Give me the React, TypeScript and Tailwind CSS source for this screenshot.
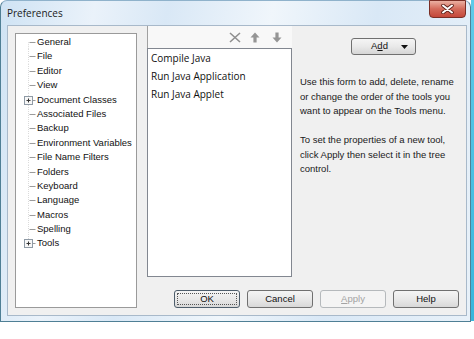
import React from "react";

const treeItems: { label: string; expandable?: boolean }[] = [
    { label: "General" },
    { label: "File" },
    { label: "Editor" },
    { label: "View" },
    { label: "Document Classes", expandable: true },
    { label: "Associated Files" },
    { label: "Backup" },
    { label: "Environment Variables" },
    { label: "File Name Filters" },
    { label: "Folders" },
    { label: "Keyboard" },
    { label: "Language" },
    { label: "Macros" },
    { label: "Spelling" },
    { label: "Tools", expandable: true },
];

const tools = ["Compile Java", "Run Java Application", "Run Java Applet"];

function TreeRow({ label, expandable, first, last }: { label: string; expandable?: boolean; first: boolean; last: boolean }) {
    return (
        <div className="flex items-center h-[14.4px] leading-[14.4px] whitespace-nowrap">
            <svg width="21" height="14.4" viewBox="0 0 21 14.4" className="shrink-0">
                <line x1="12.5" y1={first ? 7.2 : 0} x2="12.5" y2={last ? 7.2 : 14.4} stroke="#dadada" strokeWidth="1" strokeDasharray="1 1" />
                <line x1="13.5" y1="7.5" x2="19.5" y2="7.5" stroke="#9a9a9a" strokeWidth="1" />
                {expandable && (
                    <g>
                        <rect x="8.5" y="3.5" width="8" height="8" fill="#f7f7f7" stroke="#8f9aa5" />
                        <line x1="10.5" y1="7.5" x2="14.5" y2="7.5" stroke="#333" />
                        <line x1="12.5" y1="5.5" x2="12.5" y2="9.5" stroke="#333" />
                    </g>
                )}
            </svg>
            <span className="text-[#111]">{label}</span>
        </div>
    );
}

function DlgButton({ children, disabled, isDefault }: { children: React.ReactNode; disabled?: boolean; isDefault?: boolean }) {
    return (
        <div
            className={`relative w-[66px] h-[18px] rounded-[3px] border flex items-center justify-center text-[9.5px] ${
                disabled
                    ? "border-[#b5b9bc] bg-[#f4f4f4] text-[#a3a3a3]"
                    : isDefault
                    ? "border-[#4d5d6b] bg-linear-to-b from-[#f5f5f5] via-[#e9e9e9] to-[#d8d8d8] text-[#111]"
                    : "border-[#707070] bg-linear-to-b from-[#f5f5f5] via-[#e9e9e9] to-[#d8d8d8] text-[#111]"
            }`}
        >
            {isDefault && <span className="absolute inset-[2px] border border-dotted border-[#555] rounded-[1px]" />}
            <span className="relative">{children}</span>
        </div>
    );
}

export default function App() {
    return (
        <div className="w-[474px] h-[339px] bg-white flex items-start overflow-hidden font-['Liberation_Sans',Arial,sans-serif]">
            <div className="w-[471px] h-[322px] flex flex-col rounded-t-[7px] border border-[#4f7f95] border-t-[#8fb2cb] bg-[linear-gradient(100deg,#cfe3f4_0%,#eaf2fa_18%,#d9e8f6_32%,#f0f6fb_52%,#d9e8f6_72%,#e8f1f9_100%)]">
                {/* title bar */}
                <div className="h-[24px] flex items-start justify-between shrink-0">
                    <div className="pl-[6px] pt-[5px] leading-[14px] text-[10px] text-[#1a1a1a] font-['Open_Sans',sans-serif]">Preferences</div>
                    <div className="mr-[4px] -mt-px w-[37px] h-[18px] rounded-b-[4px] border border-[#7a2e25] bg-linear-to-b from-[#eab0a2] via-[#d36a5a] to-[#c4473a] flex items-center justify-center">
                        <svg width="13" height="10" viewBox="0 0 13 10">
                            <path d="M2 1.5 L11 8.5 M11 1.5 L2 8.5" stroke="#5a1f18" strokeWidth="3.6" strokeLinecap="round" />
                            <path d="M2 1.5 L11 8.5 M11 1.5 L2 8.5" stroke="#ffffff" strokeWidth="2" strokeLinecap="round" />
                        </svg>
                    </div>
                </div>

                {/* client area */}
                <div className="mx-[6px] w-[460px] h-[291px] shrink-0 border border-[#a8b9ca] bg-[#f0f0f0] flex">
                    {/* tree */}
                    <div className="ml-[7px] mt-[7px] w-[122px] h-[275px] border border-[#9a9a9a] bg-white pt-px text-[9.5px] shrink-0">
                        {treeItems.map((it, i) => (
                            <TreeRow key={it.label} label={it.label} expandable={it.expandable} first={i === 0} last={i === treeItems.length - 1} />
                        ))}
                    </div>

                    {/* right side */}
                    <div className="ml-[10px] flex-1 flex flex-col">
                        <div className="h-[251px] flex">
                            {/* tools list */}
                            <div className="w-[145px] flex flex-col">
                                <div className="h-[22px] border-l border-[#a0a0a0] bg-[#f8f8f8] flex items-center justify-end pr-[10px]">
                                    <svg width="12" height="11" viewBox="0 0 12 11" className="mr-[9px]">
                                        <path d="M1 1 L11 10 M11 1 L1 10" stroke="#8f8f8f" strokeWidth="1.6" />
                                    </svg>
                                    <svg width="10" height="11" viewBox="0 0 10 11" className="mr-[12px]">
                                        <path d="M5 0.5 L9.5 5.5 L6.6 5.5 L6.6 10.5 L3.4 10.5 L3.4 5.5 L0.5 5.5 Z" fill="#959595" />
                                    </svg>
                                    <svg width="10" height="11" viewBox="0 0 10 11">
                                        <path d="M5 10.5 L9.5 5.5 L6.6 5.5 L6.6 0.5 L3.4 0.5 L3.4 5.5 L0.5 5.5 Z" fill="#959595" />
                                    </svg>
                                </div>
                                <div className="flex-1 border border-[#828790] bg-white pl-[3px] text-[10px] leading-[18px] text-[#111] font-['Open_Sans',sans-serif]">
                                    {tools.map(t => (
                                        <div key={t}>{t}</div>
                                    ))}
                                </div>
                            </div>

                            {/* info pane */}
                            <div className="flex-1 flex flex-col">
                                <div className="ml-[59px] mt-[12px] w-[65px] h-[17px] rounded-[3px] border border-[#707070] bg-linear-to-b from-[#f5f5f5] via-[#e9e9e9] to-[#d6d6d6] flex items-center text-[9.5px] text-[#111]">
                                    <span className="ml-[19px]">A<span className="underline">d</span>d</span>
                                    <svg width="7" height="4" viewBox="0 0 7 4" className="ml-auto mr-[7px]">
                                        <path d="M0 0 L7 0 L3.5 4 Z" fill="#111" />
                                    </svg>
                                </div>
                                <div className="mt-[20px] pl-[8px] text-[9.5px] leading-[14.5px] text-[#1a1a1a] whitespace-nowrap">
                                    <p>Use this form to add, delete, rename<br />or change the order of the tools you<br />want to appear on the Tools menu.</p>
                                    <p className="mt-[14.5px]">To set the properties of a new tool,<br />click Apply then select it in the tree<br />control.</p>
                                </div>
                            </div>
                        </div>

                        {/* buttons */}
                        <div className="mt-[13px] flex justify-end gap-[7px] pr-[7px]">
                            <DlgButton isDefault>OK</DlgButton>
                            <DlgButton>Cancel</DlgButton>
                            <DlgButton disabled><span className="underline">A</span>pply</DlgButton>
                            <DlgButton>Help</DlgButton>
                        </div>
                    </div>
                </div>
            </div>
            <div className="w-[3px] h-[321px] bg-linear-to-b from-[#5fcbe9] to-[#38b6dc]" />
        </div>
    );
}
